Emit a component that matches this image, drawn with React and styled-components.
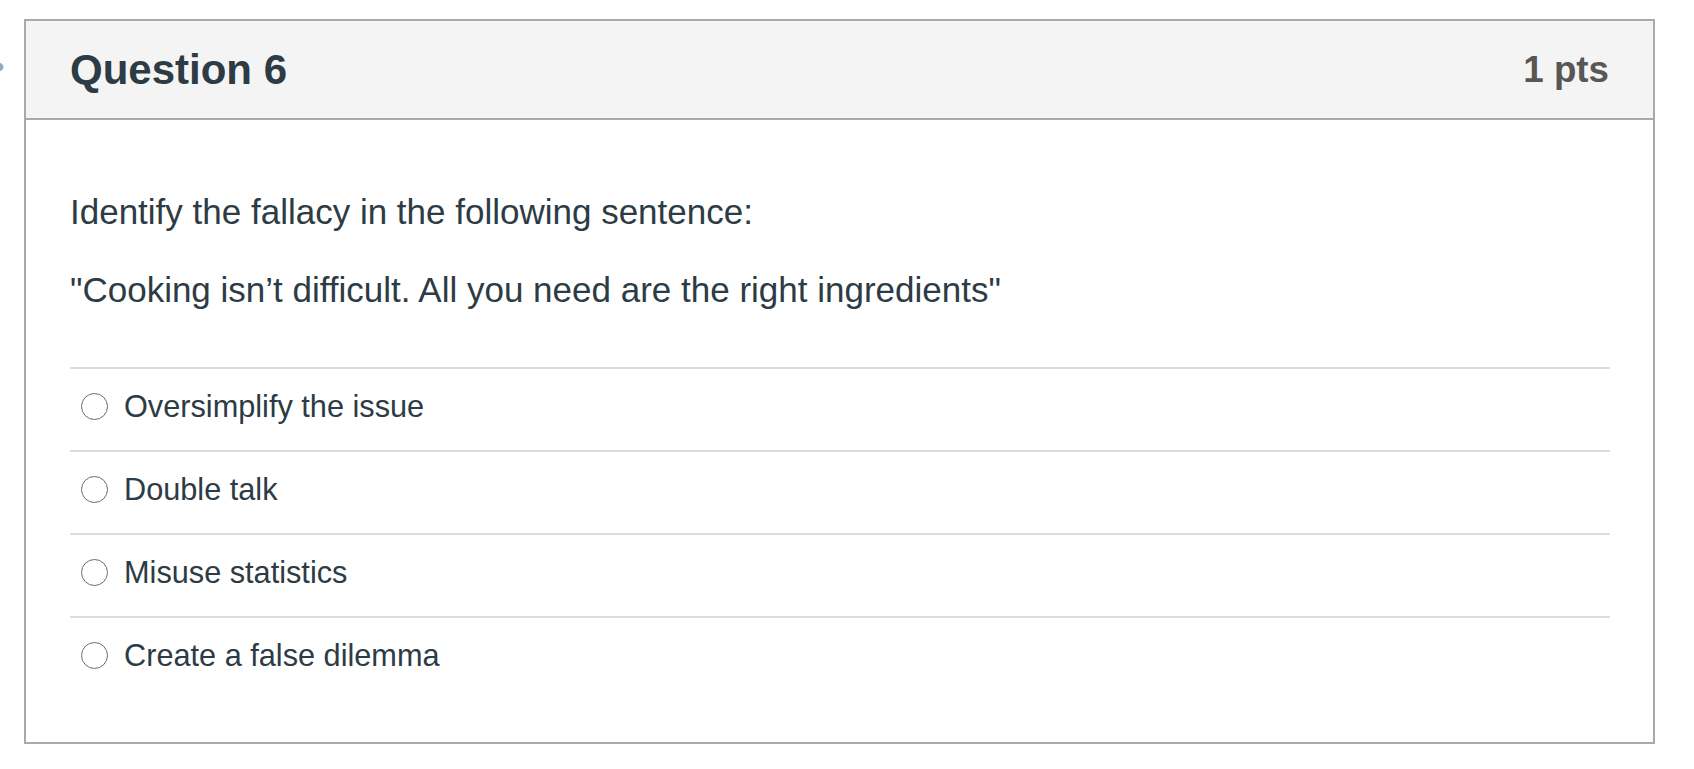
import React from "react"
import styled, { createGlobalStyle } from "styled-components"

const GlobalStyle = createGlobalStyle`
  html, body {
    margin: 0;
    padding: 0;
    background: #ffffff;
  }
  body {
    font-family: "Liberation Sans", Arial, sans-serif;
    color: #2d3b45;
  }
`

const Page = styled.div`
  position: relative;
  padding: 19px 39px 27px 24px;
`

const PinMark = styled.svg`
  position: absolute;
  left: 0;
  top: 58px;
`

const Card = styled.section`
  border: 2px solid #a9a9a9;
  background: #ffffff;
`

const Header = styled.header`
  display: flex;
  align-items: center;
  justify-content: space-between;
  height: 97px;
  padding: 0 44px;
  background: #f4f4f4;
  border-bottom: 2px solid #a9a9a9;
`

const Title = styled.h2`
  margin: 0;
  font-size: 42px;
  font-weight: 700;
  color: #2d3b45;
`

const Points = styled.div`
  font-size: 36.7px;
  font-weight: 700;
  color: #585756;
`

const Body = styled.div`
  padding: 66px 43px 43px 44px;
`

const Prompt = styled.p`
  margin: 0 0 ${props => props.$gap || 0}px;
  font-size: 35px;
  line-height: 52.5px;
  color: #2d3b45;
`

const Answers = styled.div`
  margin-top: 50px;
`

const AnswerRow = styled.label`
  display: flex;
  align-items: center;
  gap: 16px;
  height: 76px;
  padding: 0 0 5px 11px;
  box-sizing: content-box;
  border-top: 2px solid #dcdcdc;
  font-size: 30.7px;
  color: #2d3b45;
  cursor: pointer;
`

const Radio = styled.span`
  width: 25px;
  height: 25px;
  flex: 0 0 auto;
  border: 1.5px solid #6b6b6b;
  border-radius: 50%;
  background: #ffffff;
`

const answers = [
  "Oversimplify the issue",
  "Double talk",
  "Misuse statistics",
  "Create a false dilemma",
]

export default function App() {
  return (
    <>
      <GlobalStyle />
      <Page>
        <PinMark width="8" height="18" viewBox="0 0 8 18">
          <path d="M-6 1 L2 6 Q5 9 2 12 L-6 17 Z" fill="#92a9be" />
        </PinMark>
        <Card>
          <Header>
            <Title>Question 6</Title>
            <Points>1 pts</Points>
          </Header>
          <Body>
            <Prompt $gap={25.5}>Identify the fallacy in the following sentence:</Prompt>
            <Prompt>"Cooking isn’t difficult. All you need are the right ingredients"</Prompt>
            <Answers>
              {answers.map(text => (
                <AnswerRow key={text}>
                  <Radio />
                  {text}
                </AnswerRow>
              ))}
            </Answers>
          </Body>
        </Card>
      </Page>
    </>
  )
}
